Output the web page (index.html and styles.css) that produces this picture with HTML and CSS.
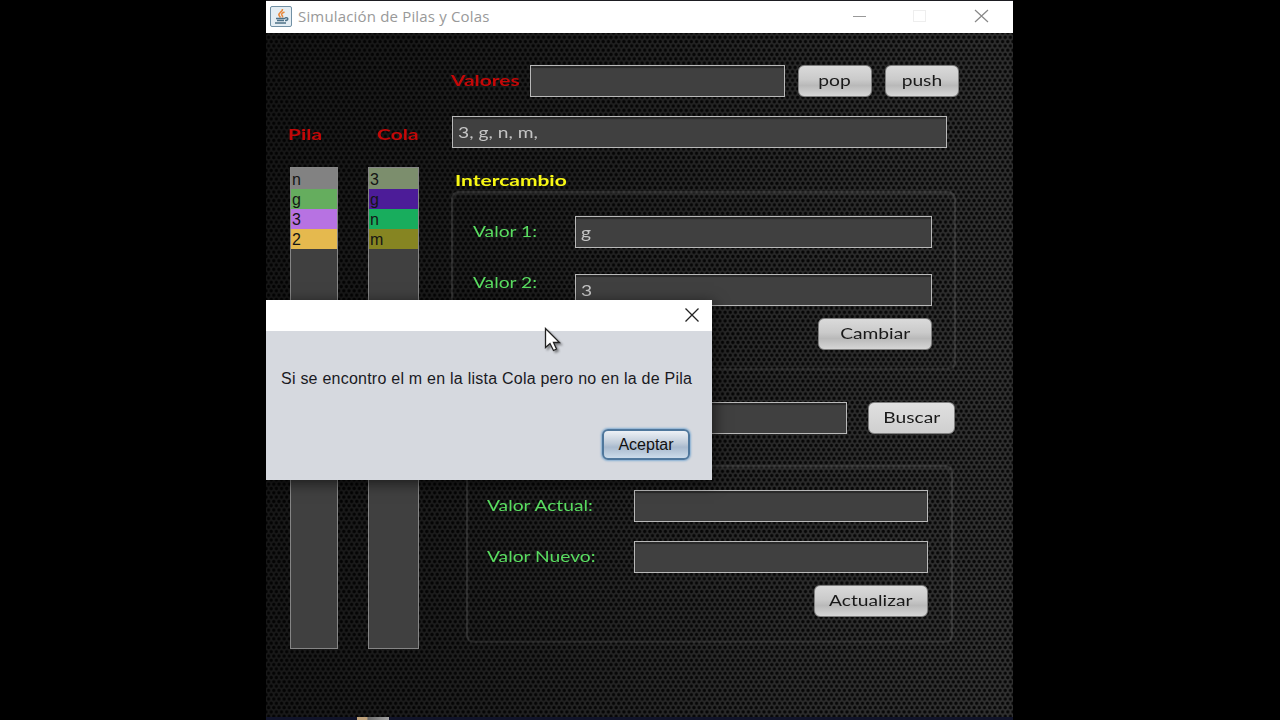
FILE: index.html
```
<!DOCTYPE html>
<html lang="es">
<head>
    <meta charset="UTF-8">
    <meta name="viewport" content="width=device-width, initial-scale=1.0">
    <title>Simulación de Pilas y Colas</title>
    <link rel="stylesheet" href="styles.css">
</head>
<body>
    <div class="window">
        <div class="titlebar">
            <svg class="java-icon" width="22" height="21" viewBox="0 0 22 21">
                <rect x="0.5" y="0.5" width="21" height="20" rx="1.5" fill="#e4edf3" stroke="#7190a5"/>
                <path d="M12.5 3C13 6 8 6.500 9 9.500L10.500 11.500M14.500 6C11 7.500 11 8.500 12.500 10V11.500" fill="none" stroke="#e8873a" stroke-width="1.500"/>
                <path d="M6 12.500H15M7 14.500H14M5 17H16M15 12C19 11 18.500 14.500 15 14.500" fill="none" stroke="#4d7188" stroke-width="1.400"/>
            </svg>
            <span class="title">Simulación de Pilas y Colas</span>
            <svg class="controls" width="140" height="20" viewBox="0 0 140 20">
                <path d="M0 10.500H13" stroke="#999"/>
                <rect x="60.500" y="4.500" width="12" height="11" fill="none" stroke="#eee"/>
                <path d="M122 4L135 16M135 4L122 16" stroke="#888" stroke-width="1.200"/>
            </svg>
        </div>

        <div class="content">
            <div class="stacks">
                <div class="stack pila">
                    <h2 class="red"><span class="wide">Pila</span></h2>
                    <ul>
                        <li class="gray">n</li>
                        <li class="green">g</li>
                        <li class="violet">3</li>
                        <li class="amber">2</li>
                    </ul>
                </div>
                <div class="stack cola">
                    <h2 class="red"><span class="wide">Cola</span></h2>
                    <ul>
                        <li class="sage">3</li>
                        <li class="purple">g</li>
                        <li class="emerald">n</li>
                        <li class="olive">m</li>
                    </ul>
                </div>
            </div>

            <div class="form">
                <div class="row values">
                    <label class="red"><span class="wide">Valores</span></label>
                    <div class="field"></div>
                    <button class="btn small"><span class="wide">pop</span></button>
                    <button class="btn small"><span class="wide">push</span></button>
                </div>
                <div class="field output"><span class="wide">3, g, n, m,</span></div>

                <h3 class="yellow"><span class="wide">Intercambio</span></h3>
                <div class="panel swap">
                    <div class="row">
                        <label><span class="wide">Valor 1:</span></label>
                        <div class="field"><span class="wide">g</span></div>
                    </div>
                    <div class="row second">
                        <label><span class="wide">Valor 2:</span></label>
                        <div class="field"><span class="wide">3</span></div>
                    </div>
                    <button class="btn"><span class="wide">Cambiar</span></button>
                </div>

                <div class="row search">
                    <div class="field"></div>
                    <button class="btn light"><span class="wide">Buscar</span></button>
                </div>

                <div class="panel update">
                    <div class="row">
                        <label><span class="wide">Valor Actual:</span></label>
                        <div class="field"></div>
                    </div>
                    <div class="row">
                        <label><span class="wide">Valor Nuevo:</span></label>
                        <div class="field"></div>
                    </div>
                    <button class="btn"><span class="wide">Actualizar</span></button>
                </div>
            </div>
        </div>
        <div class="taskbar"><div class="task"></div></div>

        <div class="dialog">
            <div class="dialog-bar">
                <svg width="14" height="14" viewBox="0 0 14 14">
                    <path d="M0.500 0.500L13.500 13.500M13.500 0.500L0.500 13.500" stroke="#222" stroke-width="1.300"/>
                </svg>
            </div>
            <div class="dialog-body">
                <p>Si se encontro el m en la lista Cola pero no en la de Pila</p>
                <button class="accept">Aceptar</button>
            </div>
        </div>

        <svg class="cursor" width="24" height="30" viewBox="0 0 24 30">
            <path d="M1.500 1.500V20.500L6 16.500L9.500 23.500L12.500 22L9.500 15.500H15.500Z" fill="#fff" stroke="#222" stroke-width="1.300"/>
        </svg>
    </div>
</body>
</html>
```

FILE: styles.css
```
* {
    box-sizing: border-box;
}
body {
    margin: 0;
    height: 720px;
    overflow: hidden;
    background-color: #000;
    font-family: "Lato", sans-serif;
}
h2, h3, p, ul {
    margin: 0;
    padding: 0;
}
.window {
    position: relative;
    width: 747px;
    height: 720px;
    margin-left: 266px;
    padding-top: 1px;
    display: flex;
    flex-direction: column;
    background-color: #1d1d22;
}
.titlebar {
    display: flex;
    align-items: center;
    height: 32px;
    padding: 0 22px 2px 4px;
    background-color: #fff;
}
.title {
    margin-left: 6px;
    padding-bottom: 1px;
    flex: 1;
    font-family: "Open Sans", sans-serif;
    font-size: 15px;
    letter-spacing: 0.17px;
    color: #999;
}
.controls {
    flex: none;
    margin-right: -2px;
}
/* perforated metal */
.content {
    flex: 1;
    display: flex;
    background-image:
        radial-gradient(circle, rgba(0, 0, 0, 0.85) 1.1px, transparent 2.2px),
        radial-gradient(circle, rgba(0, 0, 0, 0.85) 1.1px, transparent 2.2px),
        linear-gradient(100deg, #161616 0%, #1d1d1d 30%, #2d2d2d 75%, #323232 100%);
    background-size: 5.2px 8.6px, 5.2px 8.6px, 100% 100%;
    background-position: 0 0, 2.6px 4.3px, 0 0;
}
.wide {
    display: inline-block;
    transform: scaleX(1.2);
    transform-origin: left center;
    white-space: nowrap;
}
.red .wide,
.yellow .wide {
    transform: scaleX(1.31);
}
.red {
    color: #c40808;
}
.yellow {
    color: #f8f814;
}

/* listas */
.stacks {
    display: flex;
    width: 185px;
    padding: 90px 0 0 24px;
}
.stack h2 {
    height: 44px;
    font-size: 16px;
    line-height: 22px;
}
.stack ul {
    height: 482px;
    padding-top: 2px;
    list-style: none;
    border: 1px solid #858585;
    background-color: #404040;
}
.stack li {
    height: 20px;
    padding-left: 1px;
    font: 16px/22px "Liberation Sans", sans-serif;
    color: #151515;
}
.pila {
    width: 48px;
    margin-right: 30px;
}
.cola {
    width: 51px;
}
.pila h2 {
    margin-left: -2px;
}
.cola h2 {
    padding-left: 9px;
}
.stack li:first-child {
    margin-top: -2px;
    height: 21px;
    line-height: 24px;
}
.gray { background-color: #828282; }
.green { background-color: #65ad5e; }
.violet { background-color: #b772e2; }
.amber { background-color: #e5b94e; }
.sage { background-color: #7c8e6d; }
.purple { background-color: #4c1c98; }
.emerald { background-color: #18ad5d; }
.olive { background-color: #868522; }

/* formulario */
.form {
    width: 508px;
    padding-top: 32px;
}
.row {
    display: flex;
}
.row label {
    flex: none;
    font-size: 16px;
    line-height: 29px;
    color: #59dc60;
}
.field {
    flex: 1;
    height: 32px;
    padding-left: 5px;
    border: 1px solid #b9b9b9;
    box-shadow: inset 0 2px 1px #292929;
    background-color: #404040;
    font-size: 16px;
    line-height: 29px;
    color: #c4c4c4;
}
.btn {
    flex: none;
    display: block;
    width: 114px;
    height: 32px;
    padding: 0 0 2px;
    border: 1px solid #808080;
    border-radius: 6px;
    background: linear-gradient(#dadada, #cacaca 45%, #b9b9b9 65%, #d6d6d6);
    font: 16px/20px "Lato", sans-serif;
    color: #191919;
}
.btn .wide {
    transform-origin: center;
}
.btn.small {
    width: 74px;
    margin-left: 13px;
}
.btn.light {
    width: 87px;
    margin-left: 21px;
    background: linear-gradient(#e0e0e0, #cfcfcf);
}
.values label {
    width: 79px;
    font-weight: bold;
    color: #c40808;
}
/* sin crecer dentro del formulario */
.output {
    width: 495px;
    margin: 19px 0 0 1px;
}
.form h3 {
    height: 43px;
    padding: 21px 0 0 4px;
    font-size: 16px;
    line-height: 22px;
}
.panel {
    border: 2px solid rgba(120, 120, 120, 0.28);
    border-bottom-color: rgba(120, 120, 120, 0.16);
    border-radius: 8px;
    box-shadow: inset 0 2px 3px rgba(120, 120, 120, 0.16);
}
.panel .btn {
    margin-left: auto;
}
.swap {
    width: 505px;
    height: 179px;
    padding: 23px 22px 0 20px;
}
.swap label {
    width: 102px;
}
.swap .second {
    margin: 26px 0 12px;
}
.second label {
    margin-top: -7px;
}
.search {
    width: 504px;
    margin: 32px 0 31px;
}
.update {
    width: 487px;
    height: 178px;
    margin-left: 15px;
    padding: 23px 23px 0 19px;
}
.update label {
    width: 147px;
}
.update .row {
    margin-bottom: 19px;
}
.update .row + .row {
    margin-bottom: 12px;
}
.taskbar {
    height: 3px;
    background-color: #11142a;
}
.task {
    width: 32px;
    height: 3px;
    margin-left: 91px;
    background: linear-gradient(90deg, #bfa27c 30%, #6c6c6c 35%, #a5a5a5);
}

/* mensaje */
.dialog {
    position: absolute;
    left: 0;
    top: 300px;
    width: 446px;
    height: 180px;
    background-color: #d6d9df;
    box-shadow: 2px 3px 14px rgba(0, 0, 0, 0.6);
}
.dialog-bar {
    display: flex;
    justify-content: flex-end;
    height: 31px;
    padding: 8px 13px 0 0;
    background-color: #fff;
}
.dialog-body {
    padding: 38px 21px 0 15px;
}
.dialog-body p {
    font: 16px/20px "Liberation Sans", sans-serif;
    letter-spacing: 0.235px;
    color: #1a1a1f;
    white-space: nowrap;
}
.accept {
    display: block;
    width: 88px;
    height: 31px;
    margin: 40px 1px 0 auto;
    padding: 0;
    border: 2px solid #4f779c;
    border-radius: 6px;
    box-shadow: 0 0 2px 1px #85aed2;
    background: linear-gradient(#edf1f6, #bfcbd9 45%, #a9bace 60%, #cbdbea);
    font: 16px/20px "Liberation Sans", sans-serif;
    color: #111;
}
.cursor {
    position: absolute;
    left: 278px;
    top: 327px;
    filter: drop-shadow(2px 2px 1px rgba(0, 0, 0, 0.4));
}
```
